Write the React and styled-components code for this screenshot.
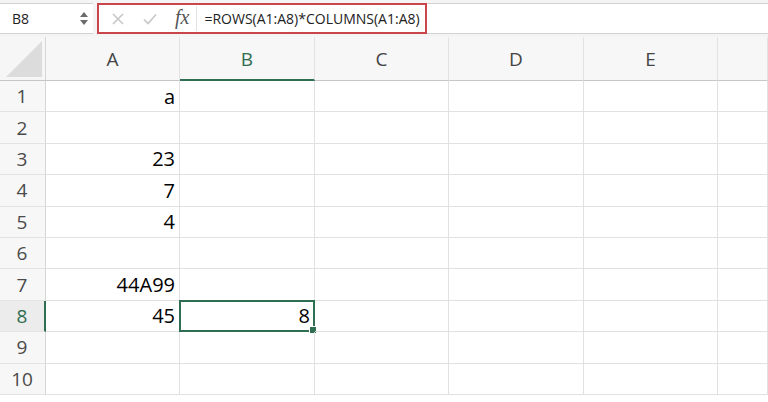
import React from 'react';
import styled, { createGlobalStyle, css } from 'styled-components';

const GREEN = '#2f6e50';

const GlobalStyle = createGlobalStyle`
  html, body {
    margin: 0;
    background: #ffffff;
    font-family: "Open Sans", "Noto Sans", sans-serif;
  }
`;

const Sheet = styled.div`
  width: 768px;
  height: 402px;
  overflow: hidden;
  display: flex;
  flex-direction: column;
  background: #fff;
`;

const TopBar = styled.div`
  height: 37px;
  box-sizing: border-box;
  padding: 3px 0 3px;
  display: flex;
  align-items: stretch;
  background: #f4f4f4;
`;

const NameBox = styled.div`
  width: 93px;
  display: flex;
  align-items: center;
  justify-content: space-between;
  box-sizing: border-box;
  padding: 0 5px 0 12px;
  background: #fff;
  border-top: 1px solid #d2d2d2;
  border-bottom: 1px solid #d2d2d2;
  font-size: 14px;
  color: #222;
`;

const Stepper = styled.div`
  display: flex;
  flex-direction: column;
  gap: 3px;
  align-items: center;
`;

const Arrow = styled.span`
  width: 0;
  height: 0;
  border-left: 4px solid transparent;
  border-right: 4px solid transparent;
  ${({ down }) => down
    ? css`border-top: 5px solid #6b6b6b;`
    : css`border-bottom: 5px solid #6b6b6b;`}
`;

const FormulaRow = styled.div`
  flex: 1;
  display: flex;
  margin-left: 4px;
  background: #fff;
  border-top: 1px solid #d2d2d2;
  border-bottom: 1px solid #d2d2d2;
`;

const Highlight = styled.div`
  width: 330px;
  box-sizing: border-box;
  margin: -1px 0;
  border: 2px solid #c9454b;
  display: flex;
  align-items: center;
  padding-left: 12px;
`;

const ToolIcon = styled.span`
  width: 31px;
  display: flex;
  align-items: center;
  color: #c7c7c7;
`;

const Fx = styled.span`
  font-family: "Liberation Serif", "DejaVu Serif", serif;
  font-style: italic;
  font-size: 20px;
  color: #555;
  padding: 0 7px 3px 2px;
  border-right: 1px solid #e2e2e2;
  line-height: 22px;
`;

const FormulaText = styled.span`
  font-size: 14px;
  color: #222;
  padding-left: 7px;
  white-space: nowrap;
`;

const Grid = styled.div`
  display: grid;
  grid-template-columns: 46px 134px 135px 134px 135px 134px 1fr;
  grid-template-rows: 44px repeat(10, 31.4px);
  flex: 1;
`;

const Corner = styled.div`
  background: #f6f6f6;
  border-right: 1px solid #d6d6d6;
  border-bottom: 1px solid #c6c6c6;
  position: relative;
  &::after {
    content: "";
    position: absolute;
    right: 3px;
    bottom: 3px;
    width: 0;
    height: 0;
    border-left: 36px solid transparent;
    border-bottom: 36px solid #dcdcdc;
  }
`;

const ColHead = styled.div`
  background: #f7f7f7;
  border-right: 1px solid #e3e3e3;
  border-bottom: ${({ active }) => (active ? `2px solid ${GREEN}` : '1px solid #c6c6c6')};
  display: flex;
  align-items: center;
  justify-content: center;
  font-size: 19px;
  color: ${({ active }) => (active ? GREEN : '#444')};
  padding-top: 1px;
`;

const RowHead = styled.div`
  background: ${({ active }) => (active ? '#ececec' : '#f7f7f7')};
  border-right: ${({ active }) => (active ? `2px solid ${GREEN}` : '1px solid #d6d6d6')};
  border-bottom: 1px solid #e3e3e3;
  display: flex;
  align-items: center;
  justify-content: center;
  font-size: 19px;
  color: ${({ active }) => (active ? GREEN : '#4a4a4a')};
  padding-right: ${({ active }) => (active ? '0' : '1px')};
`;

const Cell = styled.div`
  position: relative;
  box-sizing: border-box;
  border-right: 1px solid #e1e1e1;
  border-bottom: 1px solid #e1e1e1;
  display: flex;
  align-items: center;
  justify-content: flex-end;
  padding-right: 4px;
  font-size: 20px;
  color: #000;
  ${({ selected }) => selected && css`
    border: 2px solid ${GREEN};
    margin: -1px 0 0 -1px;
    padding-right: 3px;
  `}
`;

const Handle = styled.span`
  position: absolute;
  right: -4px;
  bottom: -4px;
  width: 6px;
  height: 6px;
  background: ${GREEN};
  border: 1px solid #fff;
`;

const columns = ['A', 'B', 'C', 'D', 'E', ''];
const data = {
  1: { A: 'a' },
  3: { A: '23' },
  4: { A: '7' },
  5: { A: '4' },
  7: { A: '44A99' },
  8: { A: '45', B: '8' },
};

const CrossIcon = () => (
  <svg width="14" height="14" viewBox="0 0 14 14">
    <path d="M2 2 L12 12 M12 2 L2 12" stroke="currentColor" strokeWidth="1.6" fill="none" />
  </svg>
);

const CheckIcon = () => (
  <svg width="16" height="14" viewBox="0 0 16 14">
    <path d="M2 7.5 L6 11.5 L14 2.5" stroke="currentColor" strokeWidth="1.6" fill="none" />
  </svg>
);

export default function App() {
  const rows = Array.from({ length: 10 }, (_, i) => i + 1);

  return (
    <Sheet>
      <GlobalStyle />
      <TopBar>
        <NameBox>
          B8
          <Stepper>
            <Arrow />
            <Arrow down />
          </Stepper>
        </NameBox>
        <FormulaRow>
          <Highlight>
            <ToolIcon><CrossIcon /></ToolIcon>
            <ToolIcon><CheckIcon /></ToolIcon>
            <Fx>fx</Fx>
            <FormulaText>=ROWS(A1:A8)*COLUMNS(A1:A8)</FormulaText>
          </Highlight>
        </FormulaRow>
      </TopBar>
      <Grid>
        <Corner />
        {columns.map((c, i) => (
          <ColHead key={i} active={c === 'B'}>{c}</ColHead>
        ))}
        {rows.map((r) => (
          <React.Fragment key={r}>
            <RowHead active={r === 8}>{r}</RowHead>
            {columns.map((c, i) => {
              const selected = r === 8 && c === 'B';
              return (
                <Cell key={i} selected={selected}>
                  {(data[r] && data[r][c]) || ''}
                  {selected && <Handle />}
                </Cell>
              );
            })}
          </React.Fragment>
        ))}
      </Grid>
    </Sheet>
  );
}
